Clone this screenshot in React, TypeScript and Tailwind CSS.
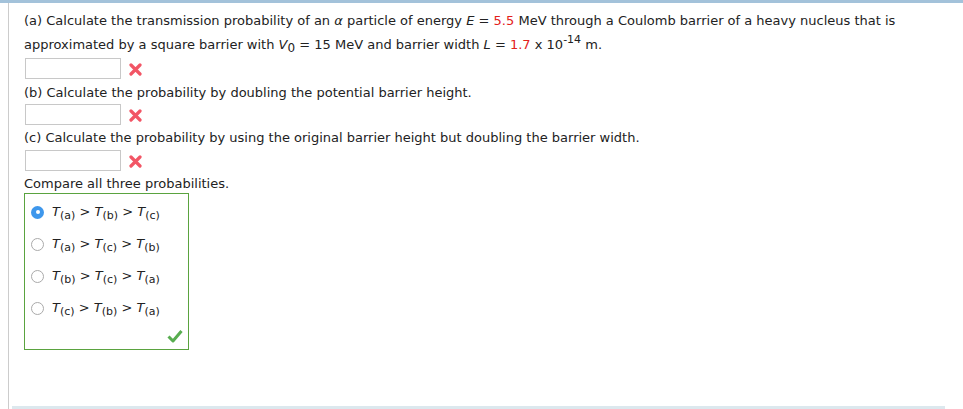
import React from 'react';

const font = { fontFamily: '"DejaVu Sans", Verdana, sans-serif' };

function Answer() {
  return (
    <div className="flex items-center gap-2 h-[21px]">
      <div className="w-[96px] h-[21px] border border-[#c8c8c8] bg-white" />
      <svg width="13" height="13" viewBox="0 0 13 13" className="mt-[2px]">
        <path d="M2 2 L11 11 M11 2 L2 11" stroke="#f25565" strokeWidth="3.2" strokeLinecap="round" />
      </svg>
    </div>
  );
}

function T({ s }: { s: string }) {
  return (
    <span>
      <i>T</i>
      <sub className="text-[11px] leading-none relative top-[3px] bottom-auto align-baseline">({s})</sub>
    </span>
  );
}

const options = [
  ['a', 'b', 'c'],
  ['a', 'c', 'b'],
  ['b', 'c', 'a'],
  ['c', 'b', 'a'],
];

export default function App() {
  return (
    <div className="w-[963px] h-[409px] bg-white text-[13px] text-[#222] overflow-hidden" style={font}>
      <div className="h-[3px] bg-[#a3c2da]" />
      <div className="flex h-[406px]">
        <div className="w-[9px] border-r border-[#cccccc]" />
        <div className="flex flex-col flex-1">
          <div className="pl-[15px] pt-[6px] flex-1">
            <p className="leading-[24px]">
              (a) Calculate the transmission probability of an <i>α</i> particle of energy <i>E</i> ={' '}
              <span className="text-[#e3201b]">5.5</span> MeV through a Coulomb barrier of a heavy nucleus that is
              <br />
              approximated by a square barrier with <i>V</i>
              <sub className="text-[12px] leading-none align-baseline relative top-[3px] bottom-auto">0</sub> = 15 MeV and barrier
              width <i>L</i> = <span className="text-[#e3201b]">1.7</span> x 10
              <sup className="text-[11px] leading-none align-baseline relative top-[-6px]">-14</sup> m.
            </p>
            <div className="mt-[1px] pl-[1px]">
              <Answer />
            </div>
            <p className="mt-[5px] leading-[18px]">(b) Calculate the probability by doubling the potential barrier height.</p>
            <div className="mt-[2px] pl-[1px]">
              <Answer />
            </div>
            <p className="mt-[4px] leading-[18px]">
              (c) Calculate the probability by using the original barrier height but doubling the barrier width.
            </p>
            <div className="mt-[3px] pl-[1px]">
              <Answer />
            </div>
            <p className="mt-[4px] leading-[18px]">Compare all three probabilities.</p>
            <div className="w-[165px] h-[157px] border border-[#5aa33f] flex flex-col pl-[6px] pt-[2px] relative">
              {options.map((o, i) => (
                <div key={i} className="flex items-center gap-[8px] h-[32px]">
                  {i === 0 ? (
                    <span className="w-[13px] h-[13px] rounded-full bg-[#3e97ec] flex items-center justify-center">
                      <span className="w-[4px] h-[4px] rounded-full bg-white" />
                    </span>
                  ) : (
                    <span className="w-[13px] h-[13px] rounded-full border border-[#aaaaaa] bg-white" />
                  )}
                  <span className="whitespace-nowrap">
                    <T s={o[0]} /> &gt; <T s={o[1]} /> &gt; <T s={o[2]} />
                  </span>
                </div>
              ))}
              <svg width="16" height="14" viewBox="0 0 16 14" className="absolute right-[5px] bottom-[6px]">
                <path d="M1.5 7.5 L6 12 L14.5 2" fill="none" stroke="#58ad50" strokeWidth="3" strokeLinejoin="round" />
              </svg>
            </div>
          </div>
          <div className="ml-[3px] mr-[18px] h-[3px] bg-[#dce8ee]" />
        </div>
      </div>
    </div>
  );
}
